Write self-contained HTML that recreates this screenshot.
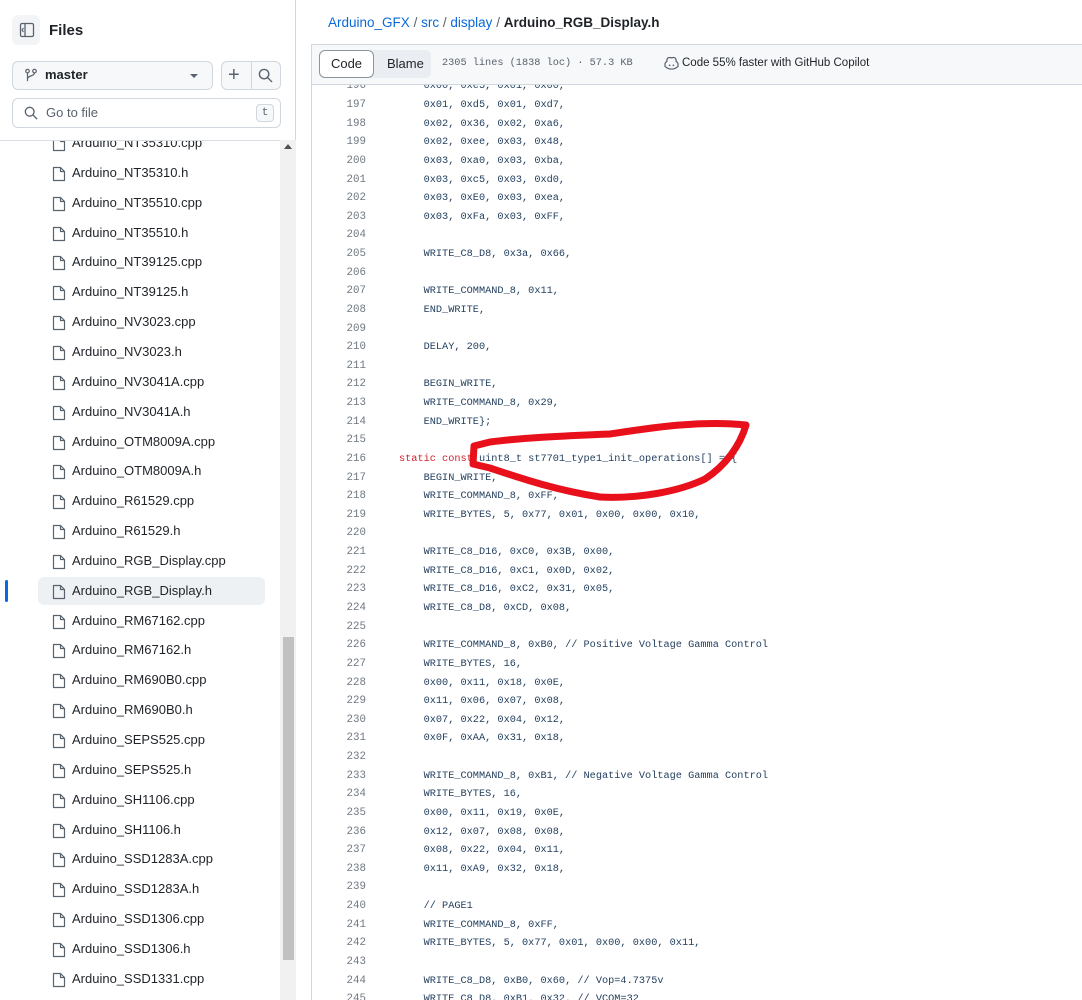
<!DOCTYPE html>
<html><head><meta charset="utf-8"><style>
*{margin:0;padding:0;box-sizing:border-box}
body{width:1082px;height:1000px;overflow:hidden;background:#fff;font-family:"Liberation Sans",sans-serif;color:#1f2328;position:relative}
.side{position:absolute;left:0;top:0;width:296px;height:1000px;border-right:1px solid #d0d7de;background:#fff}
.files{position:absolute;left:0;top:140px;width:280px;height:860px;overflow:hidden;border-top:1px solid #d8dee4}
.row{position:absolute;left:0;height:28px;width:265px;font-size:13px;line-height:28px}
.row span{position:absolute;left:72px}
.row svg{position:absolute;left:52px;top:7px}
.sel{background:#eef1f4;border-radius:6px;left:38px;width:227px}
.sel span{left:34px}.sel svg{left:14px}
.mono{font-family:"Liberation Mono",monospace}
.code{position:absolute;left:311px;top:85px;width:771px;height:915px;overflow:hidden;border-left:1px solid #d0d7de}
.ln{position:absolute;left:0;width:54px;text-align:right;font-size:10.8px;color:#6e7781;line-height:18px}
.cl{position:absolute;font-size:10.25px;color:#24405f;line-height:18px;white-space:pre}
</style></head><body>
<div class="side">
  <div style="position:absolute;left:12px;top:15px;width:28px;height:30px;background:#f3f4f6;border-radius:6px"></div>
  <svg style="position:absolute;left:19px;top:22px" width="16" height="16" viewBox="0 0 16 16"><rect x="1.5" y="1.5" width="13" height="13" rx="1.5" fill="none" stroke="#59636e" stroke-width="1.3"/><line x1="6" y1="2" x2="6" y2="14" stroke="#59636e" stroke-width="1.3"/><path d="M4.5 6L3 8l1.5 2" fill="none" stroke="#59636e" stroke-width="1.1"/></svg>
  <div style="position:absolute;left:49px;top:22px;font-size:15px;font-weight:600">Files</div>
  <div style="position:absolute;left:12px;top:61px;width:201px;height:29px;border:1px solid #d0d7de;border-radius:6px;background:#f6f8fa"></div>
  <svg style="position:absolute;left:24px;top:68px" width="14" height="14" viewBox="0 0 16 16"><circle cx="4" cy="3.5" r="2" fill="none" stroke="#59636e" stroke-width="1.4"/><circle cx="12" cy="3.5" r="2" fill="none" stroke="#59636e" stroke-width="1.4"/><path d="M4 5.5V15M12 5.5c0 4-8 3-8 7" fill="none" stroke="#59636e" stroke-width="1.4"/></svg>
  <div style="position:absolute;left:45px;top:67px;font-size:13px;font-weight:600">master</div>
  <div style="position:absolute;left:190px;top:74px;border:4px solid transparent;border-top:4px solid #59636e"></div>
  <div style="position:absolute;left:221px;top:61px;width:60px;height:29px;border:1px solid #d0d7de;border-radius:6px;background:#f6f8fa"></div>
  <div style="position:absolute;left:251px;top:62px;width:1px;height:27px;background:#d0d7de"></div>
  <div style="position:absolute;left:228px;top:62px;font-size:20px;color:#59636e;line-height:26px">+</div>
  <svg style="position:absolute;left:258px;top:68px" width="15" height="15" viewBox="0 0 16 16"><circle cx="6.5" cy="6.5" r="5" fill="none" stroke="#59636e" stroke-width="1.5"/><line x1="10" y1="10" x2="15" y2="15" stroke="#59636e" stroke-width="1.5"/></svg>
  <div style="position:absolute;left:12px;top:98px;width:269px;height:30px;border:1px solid #d0d7de;border-radius:6px"></div>
  <svg style="position:absolute;left:24px;top:106px" width="14" height="14" viewBox="0 0 16 16"><circle cx="6.5" cy="6.5" r="5" fill="none" stroke="#59636e" stroke-width="1.5"/><line x1="10" y1="10" x2="15" y2="15" stroke="#59636e" stroke-width="1.5"/></svg>
  <div style="position:absolute;left:46px;top:105px;font-size:13px;color:#59636e">Go to file</div>
  <div style="position:absolute;left:256px;top:104px;width:18px;height:18px;border:1px solid #d0d7de;border-radius:4px;font-size:11px;text-align:center;line-height:16px;color:#59636e;background:#f6f8fa" class="mono">t</div>
  <div class="files" id="files"></div>
  <div style="position:absolute;left:280px;top:140px;width:16px;height:860px;background:#f1f1f1"></div>
  <div style="position:absolute;left:284px;top:144px;border:4px solid transparent;border-bottom:5px solid #505050;border-top:0"></div>
  <div style="position:absolute;left:283px;top:637px;width:11px;height:323px;background:#c1c1c1"></div>
  <div style="position:absolute;left:5px;top:580px;width:3px;height:22px;background:#0969da;border-radius:2px"></div>
</div>
<div style="position:absolute;left:297px;top:0;width:14px;height:1000px;background:#fff"></div>
<div style="position:absolute;left:311px;top:0;width:771px;height:46px;background:#fff"></div>
<div style="position:absolute;left:328px;top:15px;font-size:13.5px"><span style="color:#0969da">Arduino_GFX</span> <span style="color:#59636e">/</span> <span style="color:#0969da">src</span> <span style="color:#59636e">/</span> <span style="color:#0969da">display</span> <span style="color:#59636e">/</span> <b style="font-weight:600">Arduino_RGB_Display.h</b></div>
<div style="position:absolute;left:311px;top:44px;width:771px;height:41px;background:#f6f8fa;border-top:1px solid #d0d7de;border-bottom:1px solid #d0d7de;border-left:1px solid #d0d7de"></div>
<div style="position:absolute;left:319px;top:50px;width:112px;height:28px;background:#eaeef2;border-radius:6px"></div>
<div style="position:absolute;left:319px;top:50px;width:55px;height:28px;background:#fff;border:1px solid #8c959f;border-radius:6px;font-size:13px;text-align:center;line-height:26px">Code</div>
<div style="position:absolute;left:387px;top:56px;font-size:13px;color:#1f2328">Blame</div>
<div class="mono" style="position:absolute;left:442px;top:57px;font-size:10.25px;color:#59636e">2305 lines (1838 loc) · 57.3 KB</div>
<svg style="position:absolute;left:664px;top:56px" width="15" height="14" viewBox="0 0 16 15"><path d="M3 5c0-3 2-4 5-3 3-1 5 0 5 3v1c1 .5 2 1.5 2 3v2c-2 2-4 3-7 3s-5-1-7-3V9c0-1.5 1-2.5 2-3z" fill="none" stroke="#59636e" stroke-width="1.3"/><circle cx="6" cy="10" r=".9" fill="#59636e"/><circle cx="10" cy="10" r=".9" fill="#59636e"/></svg>
<div style="position:absolute;left:682px;top:57px;font-size:11.5px;color:#1f2328">Code 55% faster with GitHub Copilot</div>
<div class="code" id="code"></div>
<svg style="position:absolute;left:0;top:0" width="1082" height="1000"><path d="M610 434 C560 436 520 438 490 442 L474 446 L473 464 L490 468 C520 478 555 490 600 497 C640 499 680 491 705 479 C725 466 740 446 746 425 C700 420 650 428 610 434 Z" fill="none" stroke="#e8101a" stroke-width="7" stroke-linejoin="round"/></svg>
<script>
var f=["Arduino_NT35310.cpp","Arduino_NT35310.h","Arduino_NT35510.cpp","Arduino_NT35510.h","Arduino_NT39125.cpp","Arduino_NT39125.h","Arduino_NV3023.cpp","Arduino_NV3023.h","Arduino_NV3041A.cpp","Arduino_NV3041A.h","Arduino_OTM8009A.cpp","Arduino_OTM8009A.h","Arduino_R61529.cpp","Arduino_R61529.h","Arduino_RGB_Display.cpp","Arduino_RGB_Display.h","Arduino_RM67162.cpp","Arduino_RM67162.h","Arduino_RM690B0.cpp","Arduino_RM690B0.h","Arduino_SEPS525.cpp","Arduino_SEPS525.h","Arduino_SH1106.cpp","Arduino_SH1106.h","Arduino_SSD1283A.cpp","Arduino_SSD1283A.h","Arduino_SSD1306.cpp","Arduino_SSD1306.h","Arduino_SSD1331.cpp","Arduino_SSD1331.h"];
var ic='<svg width="14" height="16" viewBox="0 0 14 16"><path d="M1.5 1.5h7l4 4v9h-11z M8.5 1.5v4h4" fill="none" stroke="#59636e" stroke-width="1.2" stroke-linejoin="round"/></svg>';
var h='';f.forEach(function(n,i){var y=142+i*29.85-140-14;h+='<div class="row'+(n=="Arduino_RGB_Display.h"?' sel':'')+'" style="top:'+y+'px">'+ic+'<span>'+n+'</span></div>';});
document.getElementById('files').innerHTML=h;
var L={196:"    0x00, 0xe5, 0x01, 0x00,",197:"    0x01, 0xd5, 0x01, 0xd7,",198:"    0x02, 0x36, 0x02, 0xa6,",199:"    0x02, 0xee, 0x03, 0x48,",200:"    0x03, 0xa0, 0x03, 0xba,",201:"    0x03, 0xc5, 0x03, 0xd0,",202:"    0x03, 0xE0, 0x03, 0xea,",203:"    0x03, 0xFa, 0x03, 0xFF,",205:"    WRITE_C8_D8, 0x3a, 0x66,",207:"    WRITE_COMMAND_8, 0x11,",208:"    END_WRITE,",210:"    DELAY, 200,",212:"    BEGIN_WRITE,",213:"    WRITE_COMMAND_8, 0x29,",214:"    END_WRITE};",216:"S",217:"    BEGIN_WRITE,",218:"    WRITE_COMMAND_8, 0xFF,",219:"    WRITE_BYTES, 5, 0x77, 0x01, 0x00, 0x00, 0x10,",221:"    WRITE_C8_D16, 0xC0, 0x3B, 0x00,",222:"    WRITE_C8_D16, 0xC1, 0x0D, 0x02,",223:"    WRITE_C8_D16, 0xC2, 0x31, 0x05,",224:"    WRITE_C8_D8, 0xCD, 0x08,",226:"    WRITE_COMMAND_8, 0xB0, // Positive Voltage Gamma Control",227:"    WRITE_BYTES, 16,",228:"    0x00, 0x11, 0x18, 0x0E,",229:"    0x11, 0x06, 0x07, 0x08,",230:"    0x07, 0x22, 0x04, 0x12,",231:"    0x0F, 0xAA, 0x31, 0x18,",233:"    WRITE_COMMAND_8, 0xB1, // Negative Voltage Gamma Control",234:"    WRITE_BYTES, 16,",235:"    0x00, 0x11, 0x19, 0x0E,",236:"    0x12, 0x07, 0x08, 0x08,",237:"    0x08, 0x22, 0x04, 0x11,",238:"    0x11, 0xA9, 0x32, 0x18,",240:"    // PAGE1",241:"    WRITE_COMMAND_8, 0xFF,",242:"    WRITE_BYTES, 5, 0x77, 0x01, 0x00, 0x00, 0x11,",244:"    WRITE_C8_D8, 0xB0, 0x60, // Vop=4.7375v",245:"    WRITE_C8_D8, 0xB1, 0x32, // VCOM=32"};
var c='';for(var n=196;n<=246;n++){var y=103+(n-197)*18.63-85-7;c+='<div class="ln mono" style="top:'+y+'px">'+n+'</div>';var t=L[n];if(t){if(t=="S")t='<span style="color:#cf222e">static const</span> uint8_t st7701_type1_init_operations[] = {';c+='<div class="cl mono" style="left:87px;top:'+y+'px">'+t+'</div>';}}
document.getElementById('code').innerHTML=c;
</script>
</body></html>
